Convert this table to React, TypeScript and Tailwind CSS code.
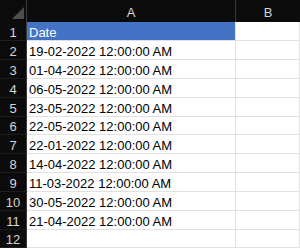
import React from "react";

const dates = [
  "19-02-2022 12:00:00 AM",
  "01-04-2022 12:00:00 AM",
  "06-05-2022 12:00:00 AM",
  "23-05-2022 12:00:00 AM",
  "22-05-2022 12:00:00 AM",
  "22-01-2022 12:00:00 AM",
  "14-04-2022 12:00:00 AM",
  "11-03-2022 12:00:00 AM",
  "30-05-2022 12:00:00 AM",
  "21-04-2022 12:00:00 AM",
];

// excel rows are not all the same height at this zoom
const rowHeights = ["h-[19px]", "h-[19px]", "h-[19px]", "h-[19px]", "h-[19px]", "h-[18px]", "h-[19px]", "h-[19px]", "h-[19px]", "h-[19px]", "h-[19px]", "h-[18px]"];

function Row({ num, value, header }: { num: number; value?: string; header?: boolean }) {
  return (
    <div className={"flex " + rowHeights[num - 1]}>
      <div className="w-[27px] shrink-0 flex items-end justify-center pb-[1px] bg-[#0b0b0b] text-[#d6d6d6] border-r border-[#3a3a3a] border-b border-b-[#1c1c1c]">
        {num}
      </div>
      <div
        className={
          "w-[209px] shrink-0 flex items-end pl-[2px] pb-[1px] border-r border-b border-[#e1e1e1] " +
          (header ? "bg-[#4472c4] text-white" : "bg-white text-black")
        }
      >
        {value}
      </div>
      <div className="w-[64px] shrink-0 bg-white border-r border-b border-[#e1e1e1]" />
    </div>
  );
}

export default function App() {
  return (
    <div className="w-[300px] h-[248px] overflow-hidden bg-white text-[13px] leading-none font-['Liberation_Sans',Arial,sans-serif]">
      <div className="flex h-[22px] bg-[#0b0b0b] text-[#d6d6d6]">
        <div className="w-[27px] shrink-0 relative border-r border-[#3a3a3a]">
          <div className="absolute left-[12px] top-[7px] w-0 h-0 border-l-[12px] border-l-transparent border-b-[12px] border-b-[#4d4d4d]" />
        </div>
        <div className="w-[209px] shrink-0 flex items-center justify-center pt-[2px] border-r border-[#3a3a3a]">A</div>
        <div className="w-[64px] shrink-0 flex items-center justify-center pt-[2px]">B</div>
      </div>
      <Row num={1} value="Date" header />
      {dates.map((d, i) => (
        <Row key={i} num={i + 2} value={d} />
      ))}
      <Row num={12} />
    </div>
  );
}
